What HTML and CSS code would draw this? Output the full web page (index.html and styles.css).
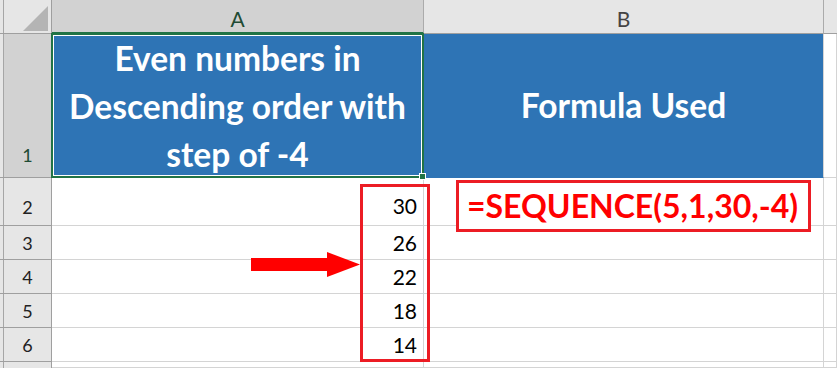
FILE: index.html
```html
<!DOCTYPE html>
<html>
<head>
<meta charset="utf-8">
<link rel="stylesheet" href="styles.css">
</head>
<body>
<div class="sheet">
  <div class="corner"><span class="tri"></span></div>
  <div class="colhead sel">A</div>
  <div class="colhead">B</div>
  <div class="colhead blank"></div>

  <div class="rowhead sel">1</div>
  <div class="cell a1">Even numbers in<br>Descending order with<br>step of -4</div>
  <div class="cell b1">Formula Used</div>
  <div class="cell"></div>

  <div class="rowhead tall">2</div>
  <div class="cell num tall">30</div>
  <div class="cell b2"><div class="formula">=SEQUENCE(5,1,30,-4)</div></div>
  <div class="cell"></div>

  <div class="rowhead">3</div>
  <div class="cell num">26</div>
  <div class="cell"></div>
  <div class="cell"></div>

  <div class="rowhead">4</div>
  <div class="cell num">22</div>
  <div class="cell"></div>
  <div class="cell"></div>

  <div class="rowhead">5</div>
  <div class="cell num">18</div>
  <div class="cell"></div>
  <div class="cell"></div>

  <div class="rowhead">6</div>
  <div class="cell num">14</div>
  <div class="cell"></div>
  <div class="cell"></div>

  <div class="rowhead"></div>
  <div class="cell"></div>
  <div class="cell"></div>
  <div class="cell"></div>

  <div class="selection"><span class="handle"></span></div>
  <div class="numbox"></div>
  <svg class="arrow" width="110" height="25" viewBox="0 0 110 25">
    <rect x="0" y="6" width="77" height="13" fill="#ff0000"/>
    <polygon points="76,0 109,12.5 76,25" fill="#ff0000"/>
  </svg>
</div>
</body>
</html>
```
FILE: styles.css
```css
* { box-sizing: border-box; }
html, body { margin: 0; padding: 0; background: #fff; }
body { width: 837px; height: 368px; overflow: hidden; font-family: Lato, "Open Sans", sans-serif; }

.sheet {
  position: relative;
  display: grid;
  grid-template-columns: 52px 372px 400px 13px;
  grid-template-rows: 34px 144px 48px 34px 34px 34px 34px 6px;
  width: 837px;
  height: 368px;
}

.corner {
  background: linear-gradient(to right, #e6e6e6 3px, #a6a6a6 3px, #a6a6a6 4px, #e6e6e6 4px);
  border-right: 1px solid #9f9f9f;
  border-bottom: 1px solid #9f9f9f;
  display: flex;
  justify-content: flex-end;
  align-items: flex-end;
  padding: 0 3px 2px 0;
}
.tri {
  width: 25px;
  height: 25px;
  background: #b4b4b4;
  clip-path: polygon(100% 0, 100% 100%, 0 100%);
}

.colhead {
  background: #e6e6e6;
  border-right: 1px solid #ababab;
  border-bottom: 1px solid #9f9f9f;
  display: flex;
  justify-content: center;
  align-items: flex-end;
  padding-bottom: 4px;
  font-size: 21px;
  color: #444;
  line-height: 1;
}
.colhead.sel {
  background: #d2d2d2;
  color: #1f4b34;
  border-bottom: 2px solid #217346;
  padding-bottom: 3px;
}
.colhead.blank { border-right: none; }

.rowhead {
  background: linear-gradient(to right, #e6e6e6 3px, #a6a6a6 3px, #a6a6a6 4px, #e6e6e6 4px);
  border-right: 1px solid #9f9f9f;
  border-bottom: 1px solid #9f9f9f;
  display: flex;
  justify-content: center;
  align-items: flex-end;
  padding-left: 4px;
  padding-bottom: 7px;
  font-size: 18px;
  line-height: 1;
  color: #222;
}
.rowhead.sel {
  background: linear-gradient(to right, #e6e6e6 3px, #a6a6a6 3px, #a6a6a6 4px, #d2d2d2 4px);
  color: #1f4b34;
  padding-bottom: 13px;
}
.rowhead.tall { padding-bottom: 9px; }

.cell {
  border-right: 1px solid #d4d4d4;
  border-bottom: 1px solid #d4d4d4;
  position: relative;
}

.a1, .b1 {
  background: #2e74b5;
  border-color: #2e74b5;
  color: #fff;
  font-weight: 700;
  font-size: 33.5px;
  line-height: 48px;
  display: flex;
  align-items: center;
  justify-content: center;
  text-align: center;
}
.b1 { border-right-color: #d4d4d4; padding-bottom: 1px; }

.num {
  display: flex;
  justify-content: flex-end;
  align-items: flex-end;
  padding: 0 6px 6px 0;
  font-size: 21px;
  line-height: 1;
  color: #000;
}
.num.tall { padding-bottom: 9px; }

.formula {
  position: absolute;
  left: 32px;
  top: 2px;
  width: 355px;
  height: 52px;
  border: 3px solid #ec1c24;
  background: #fff;
  color: #ff0000;
  font-weight: 700;
  font-size: 32px;
  line-height: 1;
  display: flex;
  align-items: center;
  padding-left: 8px;
  z-index: 2;
}

.selection {
  position: absolute;
  left: 51px;
  top: 33px;
  width: 373px;
  height: 145px;
  border: 2px solid #217346;
  box-shadow: inset 0 0 0 1px #fff;
  pointer-events: none;
}
.handle {
  position: absolute;
  right: -4px;
  bottom: -4px;
  width: 7px;
  height: 7px;
  background: #217346;
  border: 1px solid #fff;
}

.numbox {
  position: absolute;
  left: 360px;
  top: 184px;
  width: 70px;
  height: 178px;
  border: 3px solid #ec1c24;
}

.arrow {
  position: absolute;
  left: 251px;
  top: 252px;
}
```
